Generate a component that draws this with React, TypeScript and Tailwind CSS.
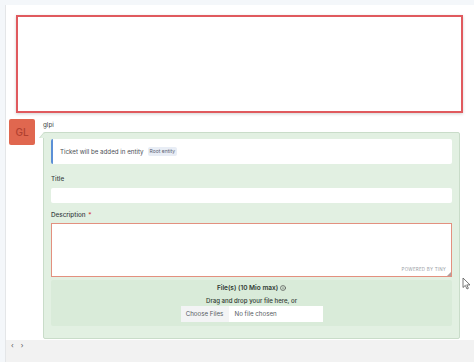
import { Info } from 'lucide-react';

const font = { fontFamily: 'Inter, "Noto Sans", sans-serif' };

function Cursor() {
  return (
    <svg className="absolute left-[462px] top-[277px]" width="9" height="13" viewBox="0 0 9 13">
      <path d="M1 1 L1 10.5 L3.3 8.4 L5 12 L6.4 11.3 L4.8 7.9 L8 7.9 Z" fill="#fff" stroke="#555" strokeWidth="0.8" strokeLinejoin="round" />
    </svg>
  );
}

export default function App() {
  return (
    <div className="relative flex h-[362px] w-[474px] flex-col overflow-hidden bg-[#f4f7fa] text-[#3a3f45]" style={font}>
      <div className="h-[5px] shrink-0" />
      <div className="flex flex-1">
        <div className="w-[5px] shrink-0" />
        <div className="flex flex-1 flex-col border-l border-[#e4e6e8] bg-white">
          <div className="flex-1 pt-[10px]">
            {/* editor of the previous followup */}
            <div className="ml-[10px] h-[98px] w-[447px] border-2 border-[#e05a5e] shadow-[0_1px_3px_rgba(0,0,0,0.18)]" />

            <div className="mt-[6px] flex">
              <div className="ml-[3px] flex h-[26px] w-[26px] shrink-0 items-center justify-center rounded-[2px] bg-[#e0674f] text-[10px] font-medium text-[#b0402f]">
                GL
              </div>
              <div className="ml-[8px] flex w-[417px] flex-col">
                <div className="h-[13px] pt-[2px] text-[6.3px] leading-[8px] text-[#3a3f45]">glpi</div>
                <div className="relative rounded-[2px] border border-[#c9dcc9] bg-[#e2f0e2] px-[7px] pb-[12px] pt-[6px]">
                  <div className="absolute -left-[5px] -top-px h-0 w-0 border-r-[5px] border-t-[6px] border-r-[#c9dcc9] border-t-transparent" />
                  <div className="absolute -left-[4px] top-0 h-0 w-0 border-r-[4px] border-t-[5px] border-r-[#e2f0e2] border-t-transparent" />

                  <div className="flex h-[25px] items-center gap-[4px] rounded-[2px] border-l-2 border-[#5b8fd6] bg-white pl-[7px] text-[6.2px] text-[#4a4f55]">
                    <span>Ticket will be added in entity</span>
                    <span className="rounded-[2px] bg-[#e8edf5] px-[2px] py-[1px] text-[5px] text-[#5a6070]">Root entity</span>
                  </div>

                  <div className="mt-[11px] h-[11px] text-[6.3px] font-medium leading-[8px] text-[#3a3f45]">Title</div>
                  <div className="mt-[2px] h-[15px] rounded-[2px] bg-white" />

                  <div className="mt-[8px] h-[11px] text-[6.3px] font-medium leading-[8px] text-[#3a3f45]">
                    Description <span className="ml-[1px] text-[#d6453d]">*</span>
                  </div>
                  <div className="relative mt-[1px] h-[54px] border border-[#e3907f] bg-white">
                    <span className="absolute bottom-[2px] right-[5px] text-[4.5px] tracking-[0.2px] text-[#9aa0a6]">POWERED BY TINY</span>
                    <svg className="absolute bottom-0 right-0" width="4" height="4" viewBox="0 0 4 4">
                      <path d="M4 0 L4 4 L0 4 Z" fill="#b0a0a0" />
                    </svg>
                  </div>

                  <div className="mt-[3px] flex h-[46px] flex-col items-center rounded-[2px] bg-[#d9ebd9] pt-[4px]">
                    <div className="flex items-center gap-[2px] text-[6.5px] font-semibold leading-[8px] text-[#2f3a32]">
                      File(s) (10 Mio max)
                      <Info size={6} strokeWidth={2.5} className="text-[#444]" />
                    </div>
                    <div className="mt-[5px] text-[6.1px] font-medium leading-[8px] text-[#2f3a32]">Drag and drop your file here, or</div>
                    <div className="mt-[1px] flex h-[16px] w-[142px] items-center bg-white text-[6.2px] text-[#555b62]">
                      <span className="flex h-full w-[48px] items-center justify-center bg-[#f3f4f5]">Choose Files</span>
                      <span className="pl-[6px]">No file chosen</span>
                    </div>
                  </div>
                </div>
              </div>
            </div>
          </div>

          <div className="mt-px flex h-[24px] shrink-0 gap-[7px] bg-[#f2f2f2] pl-[5px] pt-[2px] text-[7px] leading-[8px] text-[#555]">
            <span>‹</span>
            <span>›</span>
          </div>
        </div>
      </div>
      <Cursor />
    </div>
  );
}
